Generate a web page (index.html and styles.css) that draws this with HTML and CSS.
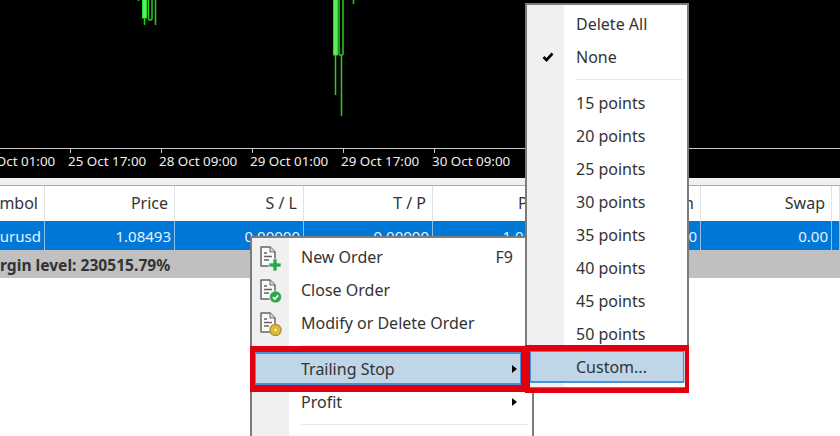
FILE: index.html
```html
<!DOCTYPE html>
<html lang="en">
<head>
    <title>Trailing Stop menu</title>
    <meta charset="utf-8">
    <link rel="stylesheet" href="styles.css">
</head>
<body>
    <div class="terminal">
        <div class="chart">
            <svg class="plot" width="840" height="148" viewBox="0 0 840 148">
                <g fill="none" stroke="#22d022">
                    <path d="M138.500 0v1M144.500 18v7M155.500 0v25M335.500 55v40M341.500 55v61M353.500 0v4" stroke-width="1.500"/>
                    <rect x="142.500" y="-2" width="4" height="20" fill="#5df05d" stroke="#2fd82f"/>
                    <rect x="148.500" y="-2" width="3.500" height="22" rx="1.500" stroke-width="1.500"/>
                    <rect x="333.500" y="-2" width="4" height="57" fill="#5df05d" stroke="#2fd82f"/>
                    <rect x="339" y="-2" width="4" height="57" rx="1" stroke-width="1.500"/>
                </g>
            </svg>
            <div class="axis">
                <span class="tick">24 Oct 01:00</span>
                <span class="tick">25 Oct 17:00</span>
                <span class="tick">28 Oct 09:00</span>
                <span class="tick">29 Oct 01:00</span>
                <span class="tick">29 Oct 17:00</span>
                <span class="tick">30 Oct 09:00</span>
            </div>
        </div>

        <div class="splitter"></div>

        <div class="table">
            <div class="table-row table-head">
                <div>Symbol</div>
                <div>Price</div>
                <div>S / L</div>
                <div>T / P</div>
                <div>Price</div>
                <div>Commission</div>
                <div>Swap</div>
                <div></div>
            </div>
            <div class="table-row table-selected">
                <div>eurusd</div>
                <div>1.08493</div>
                <div>0.00000</div>
                <div>0.00000</div>
                <div>1.08500</div>
                <div>0.00</div>
                <div>0.00</div>
                <div></div>
            </div>
            <div class="balance-row">Margin level: 230515.79%</div>
        </div>
    </div>

    <div class="menu order-menu">
        <div class="menu-item">
            <span class="menu-icon">
                <svg width="26" height="26" viewBox="0 0 26 26">
                    <path d="M3 3h9l5 5v14h-14z" fill="#fafafa" stroke="#666" stroke-width="1.500" stroke-linejoin="round"/>
                    <path d="M12 3v5h5" fill="#ddd" stroke="#666"/>
                    <path d="M6 9h3M6 12.500h8M6 16h5" stroke="#666" stroke-width="1.400"/>
                    <path d="M15 15h4v4h4v4h-4v4h-4v-4h-4v-4h4z" fill="#2aa84a" stroke="#e6f5e9" stroke-width=".7"/>
                </svg>
            </span>
            <span class="menu-label">New Order</span>
            <span class="menu-key">F9</span>
        </div>
        <div class="menu-item">
            <span class="menu-icon">
                <svg width="26" height="26" viewBox="0 0 26 26">
                    <path d="M3 3h9l5 5v14h-14z" fill="#fafafa" stroke="#666" stroke-width="1.500" stroke-linejoin="round"/>
                    <path d="M12 3v5h5" fill="#ddd" stroke="#666"/>
                    <path d="M6 9h3M6 12.500h8M6 16h5" stroke="#666" stroke-width="1.400"/>
                    <circle cx="17.500" cy="20" r="6" fill="#2aa84a" stroke="#e6f5e9" stroke-width=".7"/>
                    <path d="M14.800 20l2 2 3.400-3.600" fill="none" stroke="#fff" stroke-width="1.700"/>
                </svg>
            </span>
            <span class="menu-label">Close Order</span>
        </div>
        <div class="menu-item">
            <span class="menu-icon">
                <svg width="26" height="26" viewBox="0 0 26 26">
                    <path d="M3 3h9l5 5v14h-14z" fill="#fafafa" stroke="#666" stroke-width="1.500" stroke-linejoin="round"/>
                    <path d="M12 3v5h5" fill="#ddd" stroke="#666"/>
                    <path d="M6 9h3M6 12.500h8M6 16h5" stroke="#666" stroke-width="1.400"/>
                    <circle cx="17.500" cy="20" r="5.500" fill="#e3bd3a" stroke="#b3922a" stroke-width="1.400"/>
                    <circle cx="17.500" cy="20" r="2" fill="#fbeeb0" stroke="#b3922a" stroke-width=".6"/>
                </svg>
            </span>
            <span class="menu-label">Modify or Delete Order</span>
        </div>
        <div class="menu-separator"></div>
        <div class="menu-item menu-hover">
            <span class="menu-icon"></span>
            <span class="menu-label">Trailing Stop</span>
            <span class="menu-arrow"></span>
        </div>
        <div class="menu-item">
            <span class="menu-icon"></span>
            <span class="menu-label">Profit</span>
            <span class="menu-arrow"></span>
        </div>
        <div class="menu-separator"></div>
    </div>

    <div class="menu stop-menu">
        <div class="menu-item">
            <span class="menu-icon"></span>
            <span class="menu-label">Delete All</span>
        </div>
        <div class="menu-item">
            <span class="menu-icon menu-check">
                <svg width="12" height="10" viewBox="0 0 12 10">
                    <path d="M1.500 5l3 3 6-6.500" fill="none" stroke="#000" stroke-width="2.600"/>
                </svg>
            </span>
            <span class="menu-label">None</span>
        </div>
        <div class="menu-separator"></div>
        <div class="menu-item"><span class="menu-icon"></span><span class="menu-label">15 points</span></div>
        <div class="menu-item"><span class="menu-icon"></span><span class="menu-label">20 points</span></div>
        <div class="menu-item"><span class="menu-icon"></span><span class="menu-label">25 points</span></div>
        <div class="menu-item"><span class="menu-icon"></span><span class="menu-label">30 points</span></div>
        <div class="menu-item"><span class="menu-icon"></span><span class="menu-label">35 points</span></div>
        <div class="menu-item"><span class="menu-icon"></span><span class="menu-label">40 points</span></div>
        <div class="menu-item"><span class="menu-icon"></span><span class="menu-label">45 points</span></div>
        <div class="menu-item"><span class="menu-icon"></span><span class="menu-label">50 points</span></div>
        <div class="menu-item menu-hover"><span class="menu-icon"></span><span class="menu-label">Custom...</span></div>
    </div>

    <div class="callout callout-left"></div>
    <div class="callout callout-right"></div>
</body>
</html>
```

FILE: styles.css
```css
html, body {
    margin: 0;
    height: 436px;
    overflow: hidden;
    background-color: white;
}
body {
    position: relative;
    width: 840px;
    font-family: "Noto Sans", Arial, sans-serif;
    color: #333;
}
.chart {
    height: 178px;
    background-color: black;
    overflow: hidden;
}
.plot {
    display: block;
}
.axis {
    display: flex;
    margin-left: -21px;
    border-top: 1px solid #c8c8c8;
    color: #eee;
    font-size: 13.4px;
}
.tick {
    position: relative;
    flex: 0 0 91px;
    box-sizing: border-box;
    padding-top: 3px;
    text-indent: -2px;
    white-space: nowrap;
}
.tick::before {
    content: "";
    position: absolute;
    left: 0;
    top: 0;
    width: 1px;
    height: 4px;
    background-color: #c8c8c8;
}
.splitter {
    height: 8px;
    background-color: #f0f0f0;
    border-bottom: 1px solid #a8a8a8;
    box-sizing: border-box;
}
.table {
    margin-left: -60px;
    font-size: 16px;
}
.table-row {
    display: grid;
    grid-template-columns: 105px 130px 129px 129px 129px 139px 131px 8px;
}
.table-row > div {
    box-sizing: border-box;
    white-space: nowrap;
    text-align: right;
    overflow: hidden;
}
.table-head {
    height: 35px;
    line-height: 35px;
}
.table-head > div {
    padding-right: 6px;
    border-right: 1px solid #e2e2e2;
}
.table-selected {
    height: 29px;
    line-height: 31px;
    background-color: #0078d7;
    color: #e8f2fb;
    font-size: 15px;
}
.table-selected > div {
    padding-right: 3px;
    border-right: 1px solid #8fc0e8;
}
.balance-row {
    height: 28px;
    line-height: 30px;
    margin-left: 36px;
    background-color: #c0c0c0;
    font-size: 15.6px;
    font-weight: bold;
    white-space: nowrap;
}
.menu {
    position: absolute;
    box-sizing: border-box;
    background-color: white;
    background-image: linear-gradient(#f0f0f0, #f0f0f0);
    background-size: 37px 100%;
    background-repeat: no-repeat;
    border: 2px solid #7c7c7c;
    font-size: 16px;
}
.order-menu {
    left: 250px;
    top: 236px;
    width: 284px;
    height: 210px;
    padding-top: 2px;
}
.stop-menu {
    left: 525px;
    top: 3px;
    width: 164px;
    height: 386px;
    padding-top: 2px;
}
.menu-item {
    position: relative;
    display: flex;
    align-items: center;
    height: 33px;
}
.menu-icon {
    flex: 0 0 49px;
    display: flex;
    align-items: center;
    padding-left: 6px;
    box-sizing: border-box;
}
.menu-icon svg {
    overflow: visible;
}
.menu-check {
    padding-left: 15px;
}
.menu-label {
    flex: 1;
    white-space: nowrap;
}
.menu-key {
    padding-right: 19px;
}
.menu-arrow {
    margin-right: 15px;
    border-left: 5px solid black;
    border-top: 4px solid transparent;
    border-bottom: 4px solid transparent;
}
.menu-separator {
    height: 1px;
    margin: 6px 4px 6px 49px;
    background-color: #e8e8e8;
}
.menu-hover {
    background-color: #bfd5e8;
}
.menu-hover::after {
    content: "";
    position: absolute;
    top: 0;
    bottom: 0;
    left: 3px;
    right: 3px;
    border: 1px solid #4a90d9;
    border-width: 2px 1px;
}
.order-menu .menu-hover::after {
    right: 11px;
}
.callout {
    position: absolute;
    box-sizing: border-box;
    border: 5px solid #e2000f;
}
.callout-left {
    left: 250px;
    top: 346px;
    width: 276px;
    height: 46px;
    border-width: 6px 5px 7px 5px;
}
.callout-right {
    left: 525px;
    top: 345px;
    width: 164px;
    height: 48px;
    border-width: 6px 4px 5px 5px;
}
```
